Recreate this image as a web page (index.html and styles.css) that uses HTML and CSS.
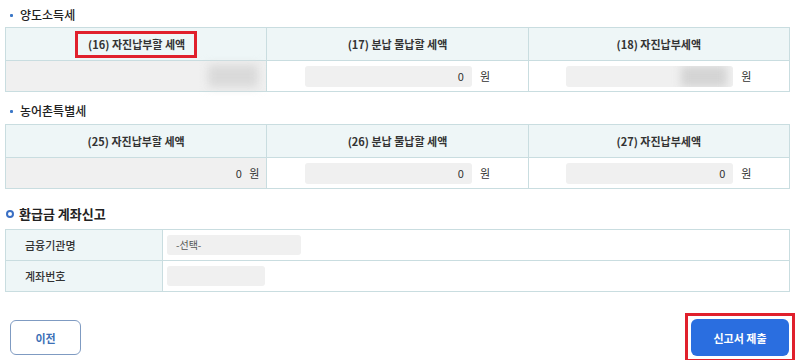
FILE: index.html
```html
<!DOCTYPE html>
<html>
<head>
    <meta charset="utf-8">
    <title>양도소득세 신고</title>
    <link rel="stylesheet" href="styles.css">
</head>
<body>
    <div class="wrap">
        <div class="sub-title first"><span class="dot"></span>양도소득세</div>
        <table class="tax-table">
            <tr>
                <th><span class="mark">(16) 자진납부할 세액</span></th>
                <th>(17) 분납 물납할 세액</th>
                <th>(18) 자진납부세액</th>
            </tr>
            <tr>
                <td class="readonly"><div class="smudge"></div></td>
                <td><div class="amount"><div class="field">0</div><span>원</span></div></td>
                <td><div class="amount"><div class="field blurred"><i></i></div><span>원</span></div></td>
            </tr>
        </table>

        <div class="sub-title"><span class="dot"></span>농어촌특별세</div>
        <table class="tax-table">
            <tr>
                <th>(25) 자진납부할 세액</th>
                <th>(26) 분납 물납할 세액</th>
                <th>(27) 자진납부세액</th>
            </tr>
            <tr>
                <td class="readonly right">0 <span class="won">원</span></td>
                <td><div class="amount"><div class="field">0</div><span>원</span></div></td>
                <td><div class="amount"><div class="field">0</div><span>원</span></div></td>
            </tr>
        </table>

        <h3 class="sec-title"><span class="ring"></span>환급금 계좌신고</h3>
        <table class="acct-table">
            <tr>
                <th>금융기관명</th>
                <td><div class="select">-선택-</div></td>
            </tr>
            <tr>
                <th>계좌번호</th>
                <td><div class="acct-input"></div></td>
            </tr>
        </table>

        <div class="btn-row">
            <button class="btn-prev">이전</button>
            <div class="mark-box"><button class="btn-submit">신고서 제출</button></div>
        </div>
    </div>
</body>
</html>
```

FILE: styles.css
```css
body {
    margin: 0;
    padding: 0;
    font-family: "Noto Sans CJK KR", "Noto Sans", sans-serif;
    color: #333;
    background: #fff;
}

.wrap {
    width: 785px;
    padding-left: 5px;
}

/* small section headers */
.sub-title {
    display: flex;
    align-items: center;
    font-size: 12px;
    font-weight: 500;
    line-height: 18px;
    padding: 10px 0 4px 4px;
    color: #222;
}

.sub-title.first {
    padding-top: 6px;
    padding-bottom: 3px;
}

.dot {
    width: 3px;
    height: 3px;
    border-radius: 1px;
    background: #3b77c7;
    margin: 0 7px 0 1px;
}

.tax-table,
.acct-table {
    width: 785px;
    border-collapse: collapse;
    table-layout: fixed;
}

.tax-table th,
.tax-table td,
.acct-table th,
.acct-table td {
    border: 1px solid #c9dde0;
    padding: 0;
}

.tax-table th {
    height: 32px;
    background: #eef6f7;
    font-size: 11px;
    font-weight: bold;
    color: #333;
}

.tax-table td {
    height: 30px;
}

.mark {
    display: inline-block;
    border: 3px solid #e0202c;
    padding: 4px 9px 4px 10px;
    line-height: 13px;
}

.readonly {
    background: #f0f0f0;
    position: relative;
}

.readonly.right {
    text-align: right;
    font-size: 11px;
    padding-right: 7px;
}

.won {
    margin-left: 5px;
}

.smudge {
    position: absolute;
    right: 8px;
    top: 4px;
    width: 50px;
    height: 22px;
    background: #d9d9d9;
    filter: blur(5px);
}

.amount {
    display: flex;
    align-items: center;
    justify-content: center;
    gap: 8px;
    font-size: 11px;
}

.field {
    width: 159px;
    height: 21px;
    line-height: 21px;
    background: #f0f0f0;
    border-radius: 3px;
    text-align: right;
    padding-right: 8px;
    position: relative;
    overflow: hidden;
}

.field.blurred i {
    position: absolute;
    right: 6px;
    top: 0;
    width: 46px;
    height: 21px;
    background: #d4d4d4;
    filter: blur(4px);
}

/* refund account block */
.sec-title {
    display: flex;
    align-items: center;
    margin: 0;
    padding: 15px 0 5px 1px;
    font-size: 13px;
    line-height: 20px;
    font-weight: bold;
    color: #222;
}

.ring {
    width: 4px;
    height: 4px;
    border: 2px solid #3a6fc4;
    border-radius: 50%;
    margin-right: 5px;
}

.acct-table th {
    width: 137px;
    height: 30px;
    background: #eef6f7;
    text-align: left;
    padding-left: 19px;
    font-size: 11px;
    font-weight: 500;
    color: #333;
}

.acct-table td {
    padding-left: 4px;
}

.select {
    width: 125px;
    height: 20px;
    line-height: 20px;
    background: #f0f0f0;
    border-radius: 3px;
    font-size: 10px;
    color: #555;
    padding-left: 9px;
}

.acct-input {
    width: 98px;
    height: 20px;
    background: #f0f0f0;
    border-radius: 3px;
}

.btn-row {
    display: flex;
    justify-content: space-between;
    align-items: center;
    margin-top: 21px;
}

.btn-prev {
    margin-left: 5px;
    width: 71px;
    height: 35px;
    background: #fff;
    border: 1px solid #7f9bc2;
    border-radius: 6px;
    color: #3b6fb6;
    font-family: inherit;
    font-size: 11px;
    font-weight: bold;
}

.mark-box {
    border: 3px solid #e0202c;
    padding: 3px;
    margin-right: -5px;
}

.btn-submit {
    display: block;
    width: 98px;
    height: 37px;
    background: #2a6ee0;
    border: none;
    border-radius: 6px;
    color: #fff;
    font-family: inherit;
    font-size: 11px;
    font-weight: bold;
}
```
